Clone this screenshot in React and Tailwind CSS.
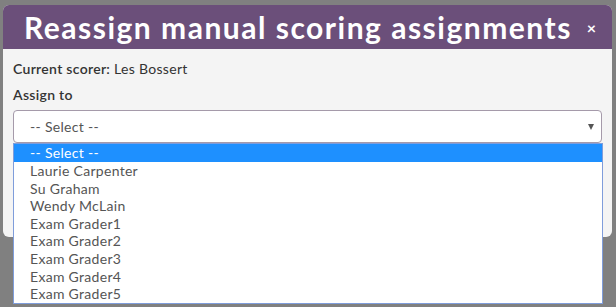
import React from 'react';

const graders = [
  'Laurie Carpenter',
  'Su Graham',
  'Wendy McLain',
  'Exam Grader1',
  'Exam Grader2',
  'Exam Grader3',
  'Exam Grader4',
  'Exam Grader5',
];

export default function App() {
  return (
    <div
      className="w-[616px] h-[307px] bg-[#808080] pt-[5px] px-[3px] overflow-hidden"
      style={{ fontFamily: 'Lato, "Noto Sans", sans-serif' }}
    >
      {/* Modal */}
      <div className="relative w-[609px] h-[232px] rounded-[6px] bg-[#f4f4f4]">
        <div className="h-[44px] rounded-t-[6px] bg-[#6b4f7a] flex items-center pl-[21px] pr-[16px]">
          <h1 className="text-white font-bold text-[30px] leading-none tracking-[1.5px]">
            Reassign manual scoring assignments
          </h1>
          <button className="ml-auto text-white font-bold text-[16px] leading-none mt-[2px]">
            ×
          </button>
        </div>

        <div className="px-[10px] pt-[12px] tracking-[0.3px]">
          <p className="text-[14px] text-[#333] leading-[16px]">
            <span className="font-semibold">Current scorer:</span> Les Bossert
          </p>
          <p className="mt-[10px] text-[14px] text-[#333] font-semibold leading-[16px]">
            Assign to
          </p>
          <div className="mt-[7px] relative h-[33px] w-[589px] rounded-[4px] border border-[#a59aaa] bg-white flex items-center pl-[16px]">
            <span className="text-[14px] text-[#555]">-- Select --</span>
            <span className="absolute right-[7px] top-[13px] w-0 h-0 border-l-[3.5px] border-r-[3.5px] border-t-[6px] border-l-transparent border-r-transparent border-t-[#555]" />
          </div>
        </div>

        {/* Open listbox */}
        <ul className="absolute left-[10px] top-[138px] w-[590px] border border-[#7f9ddb] bg-white text-[14px] text-[#555] tracking-[0.3px] z-10">
          <li className="h-[18px] leading-[18px] pl-[16px] bg-[#1e90ff] text-white">-- Select --</li>
          {graders.map((g) => (
            <li key={g} className="h-[17.6px] leading-[17.6px] pl-[16px]">
              {g}
            </li>
          ))}
        </ul>
      </div>
    </div>
  );
}
